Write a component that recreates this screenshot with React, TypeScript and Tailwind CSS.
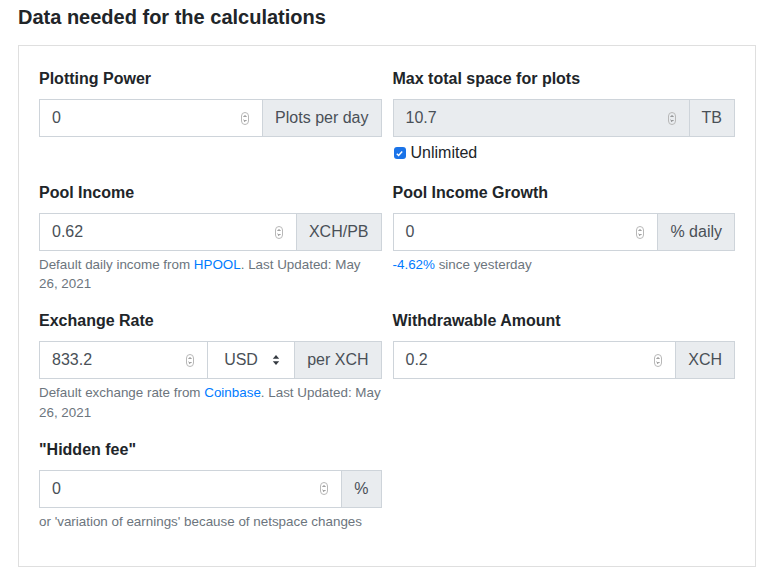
import type { ReactNode } from 'react';

function Spinner() {
  return (
    <svg className="h-[13px] w-[8px] shrink-0" viewBox="0 0 8 13" fill="none">
      <rect x="0.5" y="0.5" width="7" height="12" rx="3.5" stroke="#b8b8b8" />
      <path d="M2.6 5L4 3.6 5.4 5" stroke="#555" strokeWidth="0.9" />
      <path d="M2.6 8L4 9.4 5.4 8" stroke="#555" strokeWidth="0.9" />
    </svg>
  );
}

function NumberField({ value, disabled }: { value: string; disabled?: boolean }) {
  return (
    <div
      className={`flex min-w-0 flex-1 items-center border border-[#ced4da] pl-3 pr-[13px] ${
        disabled ? 'bg-[#e9ecef]' : 'bg-white'
      }`}
    >
      <span className="flex-1 text-base text-[#495057]">{value}</span>
      <Spinner />
    </div>
  );
}

function Addon({ children }: { children: ReactNode }) {
  return (
    <div className="flex items-center border border-l-0 border-[#ced4da] bg-[#e9ecef] px-3 text-base text-[#495057]">
      {children}
    </div>
  );
}

function Field({
  label,
  children,
  help,
}: {
  label: string;
  children: ReactNode;
  help?: ReactNode;
}) {
  return (
    <div className="mb-4">
      <div className="mb-2 text-base font-bold leading-6 text-[#212529]">{label}</div>
      <div className="flex h-[38px] rounded-[3px]">{children}</div>
      {help}
    </div>
  );
}

function Help({ children }: { children: ReactNode }) {
  return (
    <div className="mt-1 whitespace-nowrap text-[13.4px] leading-[19.2px] text-[#6c757d]">
      {children}
    </div>
  );
}

export default function App() {
  return (
    <div className="min-h-[578px] bg-white pt-[5px] font-['Liberation_Sans',Arial,sans-serif]">
      <h5 className="ml-[18px] text-[20px] font-bold leading-6 text-[#212529]">
        Data needed for the calculations
      </h5>
      <div className="ml-[18px] mt-4 w-[738px] border border-[#dfdfdf] px-5 pb-[19px] pt-[21px]">
        <div className="grid grid-cols-2 gap-x-[11px]">
          <div>
            <Field label="Plotting Power">
              <NumberField value="0" />
              <Addon>Plots per day</Addon>
            </Field>
          </div>
          <div>
            <Field
              label="Max total space for plots"
              help={
                <label className="mt-1 flex items-center gap-[5px] text-base leading-6 text-[#212529]">
                  <span className="ml-[1px] flex h-[12px] w-[12px] items-center justify-center rounded-[3px] bg-[#1a73e8]">
                    <svg viewBox="0 0 10 10" className="h-[9px] w-[9px]" fill="none">
                      <path d="M2 5.2l2 2 4-4.4" stroke="white" strokeWidth="1.6" />
                    </svg>
                  </span>
                  Unlimited
                </label>
              }
            >
              <NumberField value="10.7" disabled />
              <Addon>TB</Addon>
            </Field>
          </div>

          <div>
            <Field
              label="Pool Income"
              help={
                <Help>
                  Default daily income from <span className="text-[#007bff]">HPOOL</span>. Last
                  Updated: May
                  <br />
                  26, 2021
                </Help>
              }
            >
              <NumberField value="0.62" />
              <Addon>XCH/PB</Addon>
            </Field>
          </div>
          <div>
            <Field
              label="Pool Income Growth"
              help={
                <Help>
                  <span className="text-[#007bff]">-4.62%</span> since yesterday
                </Help>
              }
            >
              <NumberField value="0" />
              <Addon>% daily</Addon>
            </Field>
          </div>

          <div>
            <Field
              label="Exchange Rate"
              help={
                <Help>
                  Default exchange rate from <span className="text-[#007bff]">Coinbase</span>.
                  Last Updated: May
                  <br />
                  26, 2021
                </Help>
              }
            >
              <NumberField value="833.2" />
              <div className="flex w-[87px] shrink-0 items-center justify-between border border-l-0 border-[#ced4da] bg-white pl-4 pr-[14px] text-base text-[#495057]">
                USD
                <svg viewBox="0 0 8 12" className="h-[12px] w-[8px]" fill="#343a40">
                  <path d="M4 1L7.2 4.8H0.8z" />
                  <path d="M4 11L7.2 7.2H0.8z" />
                </svg>
              </div>
              <Addon>per XCH</Addon>
            </Field>
          </div>
          <div>
            <Field label="Withdrawable Amount">
              <NumberField value="0.2" />
              <Addon>XCH</Addon>
            </Field>
          </div>

          <div>
            <Field
              label={'"Hidden fee"'}
              help={<Help>or 'variation of earnings' because of netspace changes</Help>}
            >
              <NumberField value="0" />
              <Addon>%</Addon>
            </Field>
          </div>
        </div>
      </div>
    </div>
  );
}
